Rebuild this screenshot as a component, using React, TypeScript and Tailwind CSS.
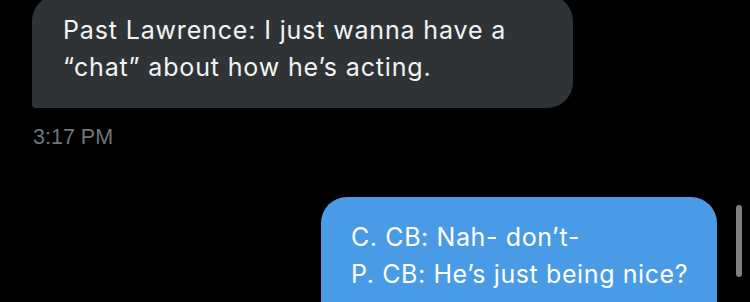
export default function App() {
  return (
    <div className="relative w-[750px] h-[302px] overflow-hidden bg-black font-['Inter','Liberation_Sans',sans-serif]">
      <div className="flex flex-col -mt-[5px]">
        <div className="ml-[32px] w-[541px] rounded-[26px] rounded-bl-[4px] bg-[#2f3336] pl-[31px] pr-4 pt-[17px] pb-[23px] text-[25px] leading-[36.5px] tracking-[0.85px] text-[#f2f3f4]">
          <p>Past Lawrence: I just wanna have a</p>
          <p>“chat” about how he’s acting.</p>
        </div>
        <div className="ml-[33px] mt-[16px] text-[21.5px] leading-[26px] text-[#71767b] font-['Liberation_Sans',Arial,sans-serif]">
          3:17 PM
        </div>
        <div className="self-end mr-[33px] mt-[47px] w-[396px] h-[140px] rounded-[26px] bg-[#4a9be6] pl-[30px] pt-[22px] text-[25px] leading-[37px] tracking-[0.6px] text-white">
          <p>C. CB: Nah- don’t-</p>
          <p>P. CB: He’s just being nice?</p>
        </div>
      </div>
      <div className="absolute left-[736px] top-[205px] h-[72px] w-[6px] rounded-full bg-[#7f7f7f]" />
    </div>
  )
}
